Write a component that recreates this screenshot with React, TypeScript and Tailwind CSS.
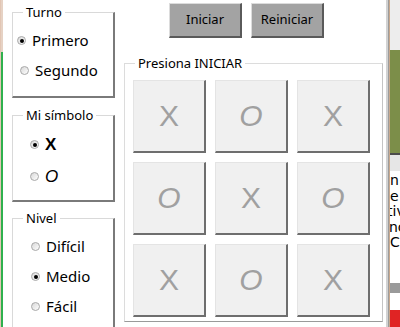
const comic = { fontFamily: '"Comic Sans MS", "Noto Sans", "DejaVu Sans", sans-serif' };

function Radio({ checked }: { checked?: boolean }) {
  return (
    <span className="flex h-[9px] w-[9px] shrink-0 items-center justify-center rounded-full border border-[#a8a8a8] bg-gradient-to-br from-[#d8d8d8] to-white">
      {checked && <span className="h-[4px] w-[4px] rounded-full bg-black" />}
    </span>
  );
}

function Option({
  label,
  checked,
  top,
  left,
  symbol,
}: {
  label: string;
  checked?: boolean;
  top: string;
  left: string;
  symbol?: "x" | "o";
}) {
  return (
    <div className={`absolute flex items-center gap-[6px] ${top} ${left}`}>
      <Radio checked={checked} />
      {symbol === "x" && (
        <span className="text-[17px] font-bold leading-none text-black" style={{ fontFamily: '"Liberation Sans", sans-serif' }}>
          {label}
        </span>
      )}
      {symbol === "o" && (
        <span className="text-[17px] italic leading-none text-black" style={{ fontFamily: '"Liberation Sans", sans-serif' }}>
          {label}
        </span>
      )}
      {!symbol && (
        <span className="text-[15px] leading-none text-black" style={comic}>
          {label}
        </span>
      )}
    </div>
  );
}

function GroupBox({
  title,
  height,
  children,
}: {
  title: string;
  height: string;
  children: React.ReactNode;
}) {
  return (
    <div
      className={`relative w-[103px] shrink-0 border-l border-t border-b-2 border-r-2 border-l-[#d9d9d9] border-t-[#d9d9d9] border-b-[#7a7a7a] border-r-[#7a7a7a] ${height}`}
    >
      <span className="absolute left-[10px] top-[-9px] bg-white px-[3px] text-[13px] leading-[16px] text-black" style={comic}>
        {title}
      </span>
      {children}
    </div>
  );
}

function Cell({ value }: { value: "X" | "O" }) {
  return (
    <div className="flex h-[73px] w-[73px] items-center justify-center border-l border-t border-b-2 border-r-2 border-l-[#e4e4e4] border-t-[#e4e4e4] border-b-[#6e6e6e] border-r-[#6e6e6e] bg-[#f0f0f0]">
      <span
        className={`text-[30px] leading-none text-[#a0a0a0] ${value === "O" ? "italic" : ""}`}
        style={{ fontFamily: '"Liberation Sans", sans-serif' }}
      >
        {value}
      </span>
    </div>
  );
}

const board: ("X" | "O")[] = ["X", "O", "X", "O", "X", "O", "X", "O", "X"];

export default function App() {
  return (
    <div className="flex h-[327px] w-[400px] overflow-hidden bg-white">
      {/* left window edge */}
      <div className="flex w-[3px] shrink-0 flex-col border-l border-[#e2c6b4]">
        <div className="h-[52px] bg-[#e6d2c4]" />
        <div className="flex-1 bg-[#2fb04e]" />
      </div>

      {/* controls column */}
      <div className="flex w-[112px] shrink-0 flex-col gap-[17px] pl-[9px] pt-[12px]">
        <GroupBox title="Turno" height="h-[86px]">
          <Option label="Primero" checked top="top-[20px]" left="left-[4px]" />
          <Option label="Segundo" top="top-[50px]" left="left-[7px]" />
        </GroupBox>
        <GroupBox title="Mi símbolo" height="h-[87px]">
          <Option label="X" checked symbol="x" top="top-[20px]" left="left-[17px]" />
          <Option label="O" symbol="o" top="top-[52px]" left="left-[17px]" />
        </GroupBox>
        <div className="-mt-px">
          <GroupBox title="Nivel" height="h-[130px]">
            <Option label="Difícil" top="top-[20px]" left="left-[18px]" />
            <Option label="Medio" checked top="top-[50px]" left="left-[18px]" />
            <Option label="Fácil" top="top-[80px]" left="left-[18px]" />
          </GroupBox>
        </div>
      </div>

      {/* game column */}
      <div className="ml-[9px] flex w-[259px] shrink-0 flex-col pt-[3px]">
        <div className="flex shrink-0 gap-[9px] pl-[45px]">
          <button className="h-[35px] w-[73px] border-l border-t border-b-2 border-r-2 border-l-[#dcdcdc] border-t-[#dcdcdc] border-b-[#5a5a5a] border-r-[#5a5a5a] bg-[#a3a3a3] text-[13px] text-black" style={comic}>
            Iniciar
          </button>
          <button className="h-[35px] w-[73px] border-l border-t border-b-2 border-r-2 border-l-[#dcdcdc] border-t-[#dcdcdc] border-b-[#5a5a5a] border-r-[#5a5a5a] bg-[#a3a3a3] text-[13px] text-black" style={comic}>
            Reiniciar
          </button>
        </div>
        <div className="relative mt-[25px] h-[259px] w-[259px] shrink-0 border-l border-t border-r border-b border-l-[#dcdcdc] border-t-[#dcdcdc] border-r-[#c4c4c4] border-b-[#9a9a9a] pl-[8px] pt-[16px]">
          <span className="absolute left-[10px] top-[-9px] bg-white px-[3px] text-[13px] leading-[16px] text-black" style={comic}>
            Presiona INICIAR
          </span>
          <div className="grid w-fit grid-cols-3 gap-[9px]">
            {board.map((v, i) => (
              <Cell key={i} value={v} />
            ))}
          </div>
        </div>
      </div>

      {/* window divider */}
      <div className="ml-[3px] flex shrink-0">
        <div className="w-[2px] bg-[#d2d2d2]" />
        <div className="w-px bg-[#9c9c9c]" />
        <div className="w-px bg-[#c9a98e]" />
      </div>

      {/* window behind */}
      <div className="flex w-[10px] shrink-0 flex-col overflow-hidden">
        <div className="h-[50px] shrink-0 bg-[#ededed]" />
        <div className="h-[103px] shrink-0 bg-[#7c8e49]" />
        <div className="h-[2px] shrink-0 bg-[#4c4c4c]" />
        <div className="h-[16px] shrink-0 bg-[#e6e6e6]" />
        <div
          className="flex h-[112px] shrink-0 flex-col bg-white pt-[2px] text-[14px] leading-[15.5px] text-black"
          style={{ fontFamily: '"DejaVu Sans", sans-serif' }}
        >
          <span className="whitespace-nowrap">n</span>
          <span className="whitespace-nowrap">e</span>
          <span className="-ml-[3px] whitespace-nowrap">tiv</span>
          <span className="-ml-[1px] whitespace-nowrap">nc</span>
          <span className="whitespace-nowrap">C</span>
        </div>
        <div className="h-[10px] shrink-0 bg-[#9a9a9a]" />
        <div className="h-[17px] shrink-0 bg-white" />
        <div className="flex-1 bg-[#e02424]" />
      </div>
    </div>
  );
}
